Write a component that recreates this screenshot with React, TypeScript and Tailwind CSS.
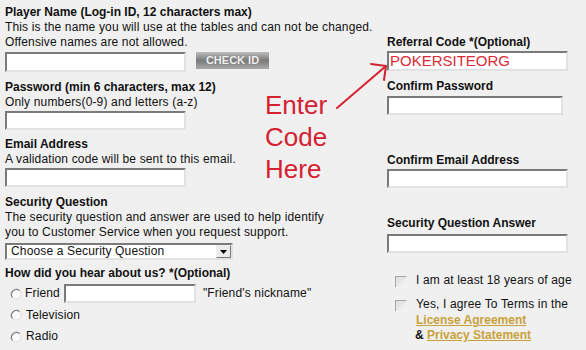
import React from "react";

const inputCls =
	"block h-[19px] bg-white border-2 border-t-[#7a7a7a] border-l-[#7a7a7a] border-b-[#e2e2e2] border-r-[#e2e2e2]";

const Radio = () => (
	<svg width="12" height="12" viewBox="0 0 12 12" className="shrink-0">
		<circle cx="6" cy="6" r="5" fill="#fafafa" stroke="#dedede" strokeWidth="1" />
		<path d="M9.5 2.5 A5 5 0 0 0 2.5 9.5" fill="none" stroke="#808080" strokeWidth="1.2" />
	</svg>
);

const Checkbox = () => (
	<span className="mt-[3px] block h-[12px] w-[12px] shrink-0 border border-t-[#a8a8a8] border-l-[#a8a8a8] border-b-[#f4f4f4] border-r-[#f4f4f4] bg-linear-to-br from-[#dcdcdc] to-[#f6f6f6]" />
);

function LeftColumn() {
	return (
		<div className="w-[387px] shrink-0 pl-[5px] pt-[5px]">
			<p className="font-bold tracking-normal">Player Name (Log-in ID, 12 characters max)</p>
			<p>This is the name you will use at the tables and can not be changed.</p>
			<p>Offensive names are not allowed.</p>
			<div className="mt-[2px] flex items-start gap-[10px]">
				<span className={`${inputCls} w-[181px] !h-[20px]`} />
				<button className="h-[17px] w-[73px] bg-linear-to-b from-[#bdbdbd] via-[#7b7b7b] to-[#a9a9a9] text-[11px] font-bold leading-[17px] tracking-normal text-[#f2f2f2] [text-shadow:0_0_1px_#666]">
					CHECK ID
				</button>
			</div>

			<p className="mt-[8px] font-bold tracking-normal">Password (min 6 characters, max 12)</p>
			<p>Only numbers(0-9) and letters (a-z)</p>
			<span className={`${inputCls} mt-[1px] w-[181px]`} />

			<p className="mt-[7px] font-bold tracking-normal">Email Address</p>
			<p>A validation code will be sent to this email.</p>
			<span className={`${inputCls} mt-[1px] w-[181px]`} />

			<p className="mt-[8px] font-bold tracking-normal">Security Question</p>
			<p>The security question and answer are used to help identify</p>
			<p>you to Customer Service when you request support.</p>
			<div className="mt-[3px] flex h-[17px] w-[228px] items-stretch bg-white border-2 border-t-[#7a7a7a] border-l-[#7a7a7a] border-b-[#e2e2e2] border-r-[#e2e2e2]">
				<span className="flex-1 pl-[4px] leading-[13px]">Choose a Security Question</span>
				<span className="flex w-[15px] items-center justify-center border border-t-[#f0f0f0] border-l-[#f0f0f0] border-b-[#7a7a7a] border-r-[#7a7a7a] bg-[#ececec]">
					<svg width="7" height="4" viewBox="0 0 7 4">
						<path d="M0 0 H7 L3.5 4 Z" fill="#000" />
					</svg>
				</span>
			</div>

			<p className="mt-[6px] font-bold tracking-normal">How did you hear about us? *(Optional)</p>
			<div className="mt-[2px] flex h-[21px] items-center pl-[5px]">
				<Radio />
				<span className="ml-[3px]">Friend</span>
				<span className={`${inputCls} ml-[4px] w-[132px]`} />
				<span className="ml-[7px]">"Friend's nickname"</span>
			</div>
			<div className="flex h-[22px] items-center pl-[5px]">
				<Radio />
				<span className="ml-[4px]">Television</span>
			</div>
			<div className="flex h-[21px] items-center pl-[5px]">
				<Radio />
				<span className="ml-[4px]">Radio</span>
			</div>
			<div className="flex h-[21px] items-center pl-[5px]">
				<Radio />
			</div>
		</div>
	);
}

function RightColumn() {
	return (
		<div className="flex-1 pt-[35px]">
			<p className="font-bold tracking-normal">Referral Code *(Optional)</p>
			<span className={`${inputCls} mt-[1px] w-[181px] !h-[20px] pl-[1px] text-[15px] leading-[16px] tracking-normal text-[#dc2a36]`}>
				POKERSITEORG
			</span>

			<p className="mt-[8px] font-bold tracking-normal">Confirm Password</p>
			<span className={`${inputCls} mt-[2px] w-[176px]`} />

			<p className="mt-[38px] font-bold tracking-normal">Confirm Email Address</p>
			<span className={`${inputCls} mt-[1px] w-[181px]`} />

			<p className="mt-[28px] font-bold tracking-normal">Security Question Answer</p>
			<span className={`${inputCls} mt-[3px] w-[181px]`} />

			<div className="mt-[20px] flex pl-[8px]">
				<Checkbox />
				<span className="ml-[9px]">I am at least 18 years of age</span>
			</div>
			<div className="mt-[9px] flex pl-[8px]">
				<Checkbox />
				<div className="ml-[9px]">
					<p>Yes, I agree To Terms in the</p>
					<p className="mt-[1px] font-bold tracking-normal text-[#c9a13b] underline">License Agreement</p>
					<p className="-ml-[1px] font-bold tracking-normal">
						&amp; <span className="text-[#c9a13b] underline">Privacy Statement</span>
					</p>
				</div>
			</div>
		</div>
	);
}

export default function App() {
	return (
		<div className="relative h-[350px] w-[586px] overflow-hidden bg-[#f0f0f0] font-['Liberation_Sans',Arial,sans-serif] text-[12px] leading-[15px] tracking-[0.15px] text-[#111]">
			<div className="flex">
				<LeftColumn />
				<RightColumn />
			</div>

			{/* annotation over the form */}
			<div className="absolute left-[265px] top-[89px] text-[26px] leading-[32px] tracking-normal text-[#d42230]">
				<p>Enter</p>
				<p>Code</p>
				<p>Here</p>
			</div>
			<svg className="absolute left-0 top-0" width="586" height="350" viewBox="0 0 586 350">
				<path d="M337 108 L386 66 M386 66 L371 64 M386 66 L384 80" stroke="#d42230" strokeWidth="2" fill="none" strokeLinecap="round" />
			</svg>
		</div>
	);
}
